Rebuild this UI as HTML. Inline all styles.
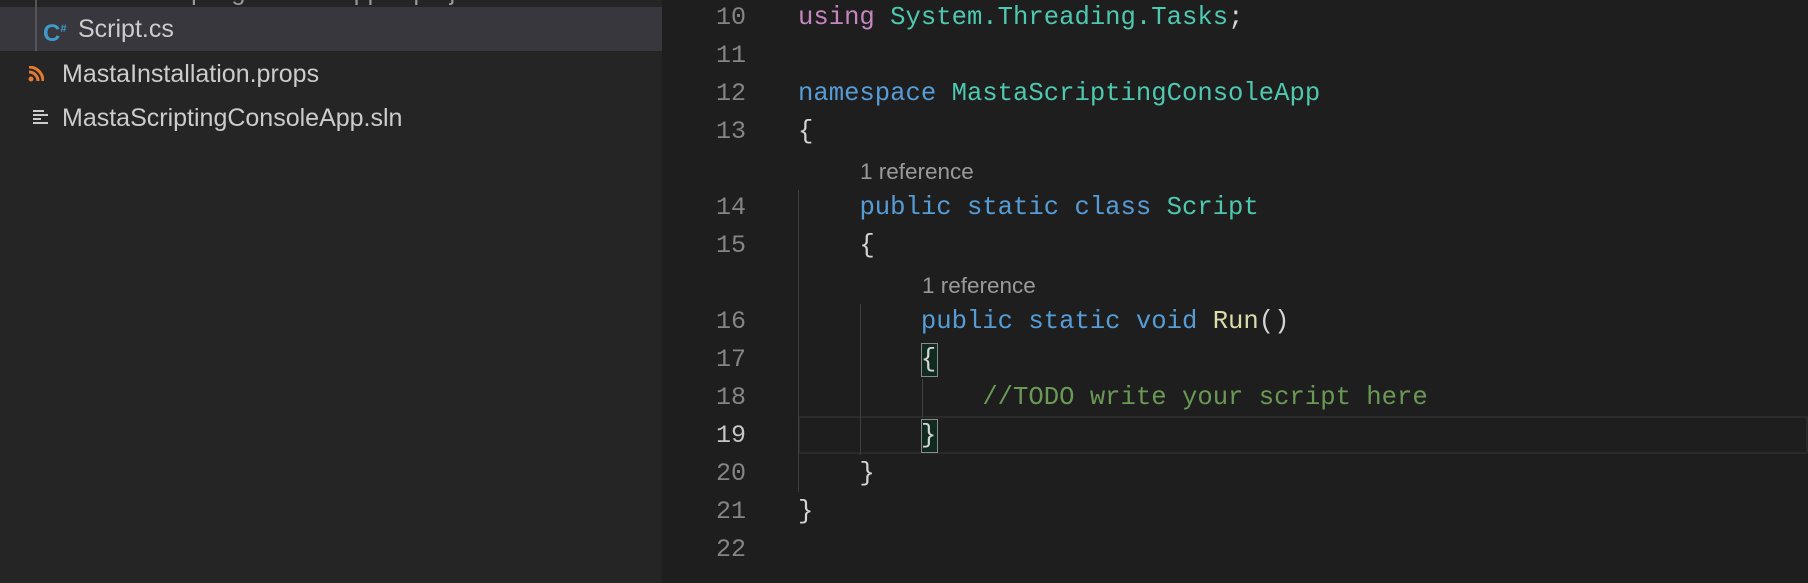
<!DOCTYPE html>
<html><head><style>
*{margin:0;padding:0;box-sizing:border-box}
body{width:1808px;height:583px;overflow:hidden;background:#1e1e1e;position:relative;font-family:"Liberation Sans",sans-serif}
#side{position:absolute;left:0;top:0;width:662px;height:583px;background:#252526}
.sr{position:absolute;left:0;width:662px;height:44px;line-height:44px;color:#cccccc;font-size:25px}
.ln{position:absolute;left:640px;width:106px;text-align:right;font-family:"Liberation Mono",monospace;font-size:25px;color:#858585;height:38px;line-height:38px}
.cd{position:absolute;left:798px;font-family:"Liberation Mono",monospace;font-size:25.6px;color:#d4d4d4;height:38px;line-height:38px;white-space:pre}
.ref{position:absolute;font-size:22.5px;color:#999;height:38px;line-height:38px}
.k{color:#569cd6}.t{color:#4ec9b0}.u{color:#c586c0}.f{color:#dcdcaa}.c{color:#6a9955}
.g{position:absolute;width:1px;background:#404040}
.bm{position:absolute;border:1px solid #8a8a8a;background:#0f2a1f;width:17px;height:34px}
</style></head><body>
<div id="side">
<div class="sr" style="top:-30px;left:80px;color:#999">MastaScriptingConsoleApp.csproj</div>
<div style="position:absolute;left:0;top:7px;width:662px;height:44px;background:#37373d"></div>
<div style="position:absolute;left:35px;top:0;width:2px;height:51px;background:#555"></div>
<div class="sr" style="top:7px;"><span style="position:absolute;left:43px;color:#3e9bc9;font-weight:bold;font-size:24px">C<sup style="font-size:11px">#</sup></span><span style="position:absolute;left:78px">Script.cs</span></div>
<div class="sr" style="top:52px;"><svg style="position:absolute;left:28px;top:14px" width="16" height="16" viewBox="0 0 16 16"><circle cx="3" cy="13" r="2.5" fill="#e37933"/><path d="M1 6a9 9 0 0 1 9 9M1 1a14 14 0 0 1 14 14" stroke="#e37933" stroke-width="3" fill="none"/></svg><span style="position:absolute;left:62px">MastaInstallation.props</span></div>
<div class="sr" style="top:96px;"><svg style="position:absolute;left:33px;top:13px" width="16" height="18" viewBox="0 0 16 18"><path d="M0 2h11M0 6h15M0 10h8M0 14h15" stroke="#ccc" stroke-width="2"/></svg><span style="position:absolute;left:62px">MastaScriptingConsoleApp.sln</span></div>
</div>

<div style="position:absolute;left:798px;top:416px;width:1010px;height:38px;border:2px solid #2a2a2a"></div>
<div class="g" style="left:798px;top:190px;height:302px"></div>
<div class="g" style="left:860px;top:304px;height:151px"></div>
<div class="g" style="left:922px;top:379px;height:38px"></div>
<div class="bm" style="left:921px;top:343px"></div>
<div class="bm" style="left:921px;top:419px"></div>

<div class="ln" style="top:-1px">10</div><div class="cd" style="top:-1px"><span class="u">using</span> <span class="t">System.Threading.Tasks</span>;</div>
<div class="ln" style="top:37px">11</div>
<div class="ln" style="top:75px">12</div><div class="cd" style="top:75px"><span class="k">namespace</span> <span class="t">MastaScriptingConsoleApp</span></div>
<div class="ln" style="top:113px">13</div><div class="cd" style="top:113px">{</div>
<div class="ref" style="left:860px;top:153px">1 reference</div>
<div class="ln" style="top:189px">14</div><div class="cd" style="top:189px">    <span class="k">public</span> <span class="k">static</span> <span class="k">class</span> <span class="t">Script</span></div>
<div class="ln" style="top:227px">15</div><div class="cd" style="top:227px">    {</div>
<div class="ref" style="left:922px;top:267px">1 reference</div>
<div class="ln" style="top:303px">16</div><div class="cd" style="top:303px">        <span class="k">public</span> <span class="k">static</span> <span class="k">void</span> <span class="f">Run</span>()</div>
<div class="ln" style="top:341px">17</div><div class="cd" style="top:341px">        {</div>
<div class="ln" style="top:379px">18</div><div class="cd" style="top:379px">            <span class="c">//TODO write your script here</span></div>
<div class="ln" style="top:417px;color:#c6c6c6">19</div><div class="cd" style="top:417px">        }</div>
<div class="ln" style="top:455px">20</div><div class="cd" style="top:455px">    }</div>
<div class="ln" style="top:493px">21</div><div class="cd" style="top:493px">}</div>
<div class="ln" style="top:531px">22</div>
</body></html>
